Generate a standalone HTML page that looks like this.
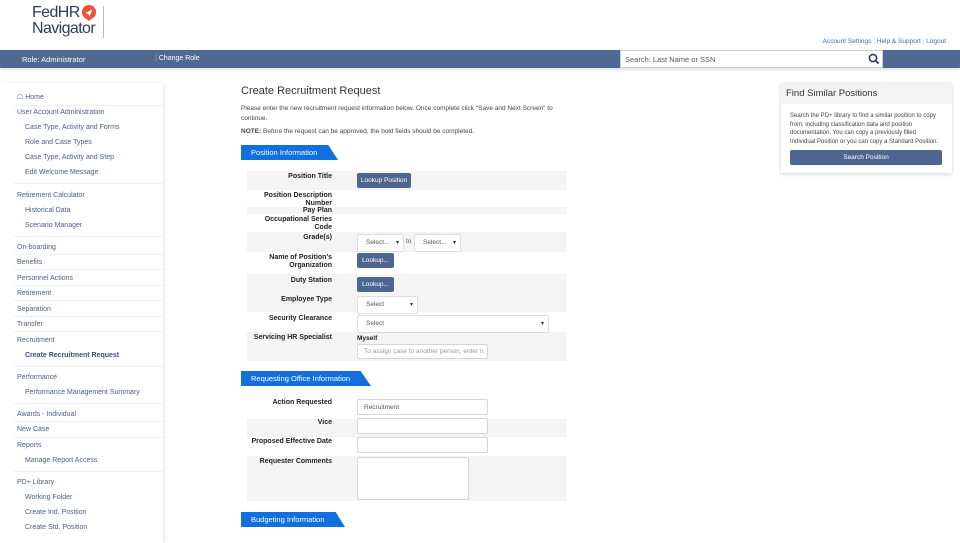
<!DOCTYPE html>
<html><head><meta charset="utf-8"><style>
*{box-sizing:border-box;margin:0;padding:0}
body{width:960px;height:540px;overflow:hidden;background:#fff;font-family:"Liberation Sans",sans-serif;position:relative}
.a{position:absolute;white-space:nowrap}
.sb{font-size:7px;color:#4d5c85;line-height:8px}
.sep{position:absolute;left:14px;width:149px;height:1px;background:#eef0f4}
.lbl{position:absolute;font-size:7px;font-weight:bold;color:#222;text-align:right;width:125px;left:207px;line-height:8px}
.row{position:absolute;left:247px;width:320px;background:#f4f4f4}
.btn{position:absolute;background:#4e6591;color:#fff;font-size:6.5px;border-radius:2px;text-align:center;line-height:15px}
.sel{position:absolute;background:#fff;border:1px solid #ddd;border-radius:2px;font-size:6.5px;color:#555;padding-left:8px;line-height:16px}
.sel:after{content:"▾";position:absolute;right:4px;font-size:6px;color:#333}
.inp{position:absolute;background:#fff;border:1px solid #d6d6d6;border-radius:2px;font-size:6.5px;color:#555;padding-left:6px;line-height:14px}
.sec{position:absolute;left:241px;height:15px;color:#fff;font-size:7.5px;line-height:15px;padding-left:10px;background:#1170de}
</style></head><body>
<!-- logo -->
<div class="a" style="left:32px;top:5px;font-size:16px;line-height:16px;color:#2d3b63;letter-spacing:-0.6px">FedHR<br>Navigator</div>
<svg class="a" style="left:81px;top:4px" width="16" height="18" viewBox="0 0 18 19"><path d="M9 0.5a8 8 0 0 1 5.6 13.7L9 18.5 3.4 14.2A8 8 0 0 1 9 0.5z" fill="#e8563a"/><path d="M5 9.5l8-4-3.5 8-1-3z" fill="#fff"/></svg>
<div class="a" style="left:103px;top:6px;width:1px;height:32px;background:#bbb"></div>
<div class="a" style="right:14px;top:38px;font-size:6.5px;color:#3d6ea8">Account Settings <span style="color:#ccc">|</span> Help &amp; Support <span style="color:#ccc">|</span> Logout</div>
<!-- bar -->
<div class="a" style="left:0;top:50px;width:960px;height:18px;background:#4f6993;box-shadow:0 2px 3px rgba(0,0,0,.12)"></div>
<div class="a" style="left:22px;top:55px;font-size:7.5px;color:#fff">Role: Administrator</div>
<div class="a" style="left:155px;top:55px;font-size:7px;color:#fff"><span style="color:#aab">|</span> Change Role</div>
<div class="a" style="left:620px;top:50px;width:263px;height:18px;background:#fff;border:1px solid #c8cfdc"></div>
<div class="a" style="left:625px;top:55px;font-size:7.5px;color:#555">Search: Last Name or SSN</div>
<svg class="a" style="left:868px;top:53px" width="12" height="12" viewBox="0 0 12 12"><circle cx="5" cy="5" r="3.6" fill="none" stroke="#2d3b63" stroke-width="1.6"/><path d="M7.6 7.6l3 3" stroke="#2d3b63" stroke-width="1.8"/></svg>
<!-- sidebar -->
<div class="a" style="left:0;top:83px;width:163px;height:460px;background:#fff;box-shadow:2px 0 3px rgba(0,0,0,.08)"></div>
<div class="a sb" style="left:17px;top:94px">&#9750; Home</div>
<div class="sep" style="top:105px"></div>
<div class="a sb" style="left:17px;top:109px">User Account Administration</div>
<div class="a sb" style="left:25px;top:124px">Case Type, Activity and Forms</div>
<div class="a sb" style="left:25px;top:139px">Role and Case Types</div>
<div class="a sb" style="left:25px;top:154px">Case Type, Activity and Step</div>
<div class="a sb" style="left:25px;top:169px">Edit Welcome Message</div>
<div class="sep" style="top:183px"></div>
<div class="a sb" style="left:17px;top:192px">Retirement Calculator</div>
<div class="a sb" style="left:25px;top:207px">Historical Data</div>
<div class="a sb" style="left:25px;top:222px">Scenario Manager</div>
<div class="sep" style="top:236px"></div>
<div class="a sb" style="left:17px;top:244px">On-boarding</div>
<div class="sep" style="top:254px"></div>
<div class="a sb" style="left:17px;top:259px">Benefits</div>
<div class="sep" style="top:269px"></div>
<div class="a sb" style="left:17px;top:275px">Personnel Actions</div>
<div class="sep" style="top:285px"></div>
<div class="a sb" style="left:17px;top:290px">Retirement</div>
<div class="sep" style="top:300px"></div>
<div class="a sb" style="left:17px;top:306px">Separation</div>
<div class="sep" style="top:316px"></div>
<div class="a sb" style="left:17px;top:321px">Transfer</div>
<div class="sep" style="top:331px"></div>
<div class="a sb" style="left:17px;top:337px">Recruitment</div>
<div class="a sb" style="left:25px;top:352px;font-weight:bold;color:#3f5080">Create Recruitment Request</div>
<div class="sep" style="top:366px"></div>
<div class="a sb" style="left:17px;top:374px">Performance</div>
<div class="a sb" style="left:25px;top:389px">Performance Management Summary</div>
<div class="sep" style="top:403px"></div>
<div class="a sb" style="left:17px;top:411px">Awards - Individual</div>
<div class="sep" style="top:421px"></div>
<div class="a sb" style="left:17px;top:426px">New Case</div>
<div class="sep" style="top:437px"></div>
<div class="a sb" style="left:17px;top:442px">Reports</div>
<div class="a sb" style="left:25px;top:457px">Manage Report Access</div>
<div class="sep" style="top:471px"></div>
<div class="a sb" style="left:17px;top:479px">PD+ Library</div>
<div class="a sb" style="left:25px;top:494px">Working Folder</div>
<div class="a sb" style="left:25px;top:509px">Create Ind. Position</div>
<div class="a sb" style="left:25px;top:524px">Create Std. Position</div>
<!-- main -->
<div class="a" style="left:241px;top:85px;font-size:11px;color:#333">Create Recruitment Request</div>
<div class="a" style="left:241px;top:104px;font-size:6.5px;color:#444;line-height:10px">Please enter the new recruitment request information below. Once complete click "Save and Next Screen" to<br>continue.</div>
<div class="a" style="left:241px;top:128px;font-size:6.5px;color:#444"><b>NOTE:</b> Before the request can be approved, the bold fields should be completed.</div>
<div class="sec" style="top:145px;width:97px;clip-path:polygon(0 0,90% 0,100% 100%,0 100%)">Position Information</div>
<div class="row" style="top:171px;height:19px"></div>
<div class="row" style="top:207px;height:7px"></div>
<div class="row" style="top:232px;height:20px"></div>
<div class="row" style="top:274px;height:38px"></div>
<div class="row" style="top:332px;height:29px"></div>
<div class="lbl" style="top:173px">Position Title</div>
<div class="lbl" style="top:192px">Position Description<br>Number</div>
<div class="lbl" style="top:207px">Pay Plan</div>
<div class="lbl" style="top:216px">Occupational Series<br>Code</div>
<div class="lbl" style="top:234px">Grade(s)</div>
<div class="lbl" style="top:254px">Name of Position's<br>Organization</div>
<div class="lbl" style="top:277px">Duty Station</div>
<div class="lbl" style="top:296px">Employee Type</div>
<div class="lbl" style="top:315px">Security Clearance</div>
<div class="lbl" style="top:334px">Servicing HR Specialist</div>
<div class="btn" style="left:357px;top:173px;width:54px">Lookup Position</div>
<div class="sel" style="left:357px;top:234px;width:47px">Select...</div>
<div class="a" style="left:406px;top:238px;font-size:6.5px;color:#555">to</div>
<div class="sel" style="left:414px;top:234px;width:47px">Select...</div>
<div class="btn" style="left:357px;top:253px;width:37px">Lookup...</div>
<div class="btn" style="left:357px;top:277px;width:37px">Lookup...</div>
<div class="sel" style="left:357px;top:296px;width:61px">Select</div>
<div class="sel" style="left:357px;top:315px;width:192px">Select</div>
<div class="a" style="left:357px;top:335px;font-size:6.5px;font-weight:bold;color:#222">Myself</div>
<div class="inp" style="left:357px;top:344px;width:131px;height:15px;color:#999;overflow:hidden">To assign case to another person, enter n</div>
<div class="sec" style="top:371px;width:130px;clip-path:polygon(0 0,92% 0,100% 100%,0 100%)">Requesting Office Information</div>
<div class="row" style="top:419px;height:18px"></div>
<div class="row" style="top:456px;height:45px"></div>
<div class="lbl" style="top:399px">Action Requested</div>
<div class="lbl" style="top:419px">Vice</div>
<div class="lbl" style="top:438px">Proposed Effective Date</div>
<div class="lbl" style="top:458px">Requester Comments</div>
<div class="inp" style="left:357px;top:399px;width:131px;height:16px;line-height:15px">Recruitment</div>
<div class="inp" style="left:357px;top:418px;width:131px;height:16px"></div>
<div class="inp" style="left:357px;top:437px;width:131px;height:16px"></div>
<div class="inp" style="left:357px;top:457px;width:112px;height:43px"></div>
<div class="sec" style="top:512px;width:104px;clip-path:polygon(0 0,91% 0,100% 100%,0 100%)">Budgeting Information</div>
<!-- right panel -->
<div class="a" style="left:781px;top:83px;width:171px;height:90px;background:#fff;box-shadow:0 1px 4px rgba(0,0,0,.18)"></div>
<div class="a" style="left:781px;top:83px;width:171px;height:21px;background:#f3f3f3"></div>
<div class="a" style="left:786px;top:88px;font-size:9.5px;color:#333">Find Similar Positions</div>
<div class="a" style="left:790px;top:112px;font-size:6px;color:#444;line-height:8.6px">Search the PD+ library to find a similar position to copy<br>from; including classification data and position<br>documentation. You can copy a previously filled<br>Individual Position or you can copy a Standard Position.</div>
<div class="btn" style="left:790px;top:150px;width:152px">Search Position</div>
</body></html>
